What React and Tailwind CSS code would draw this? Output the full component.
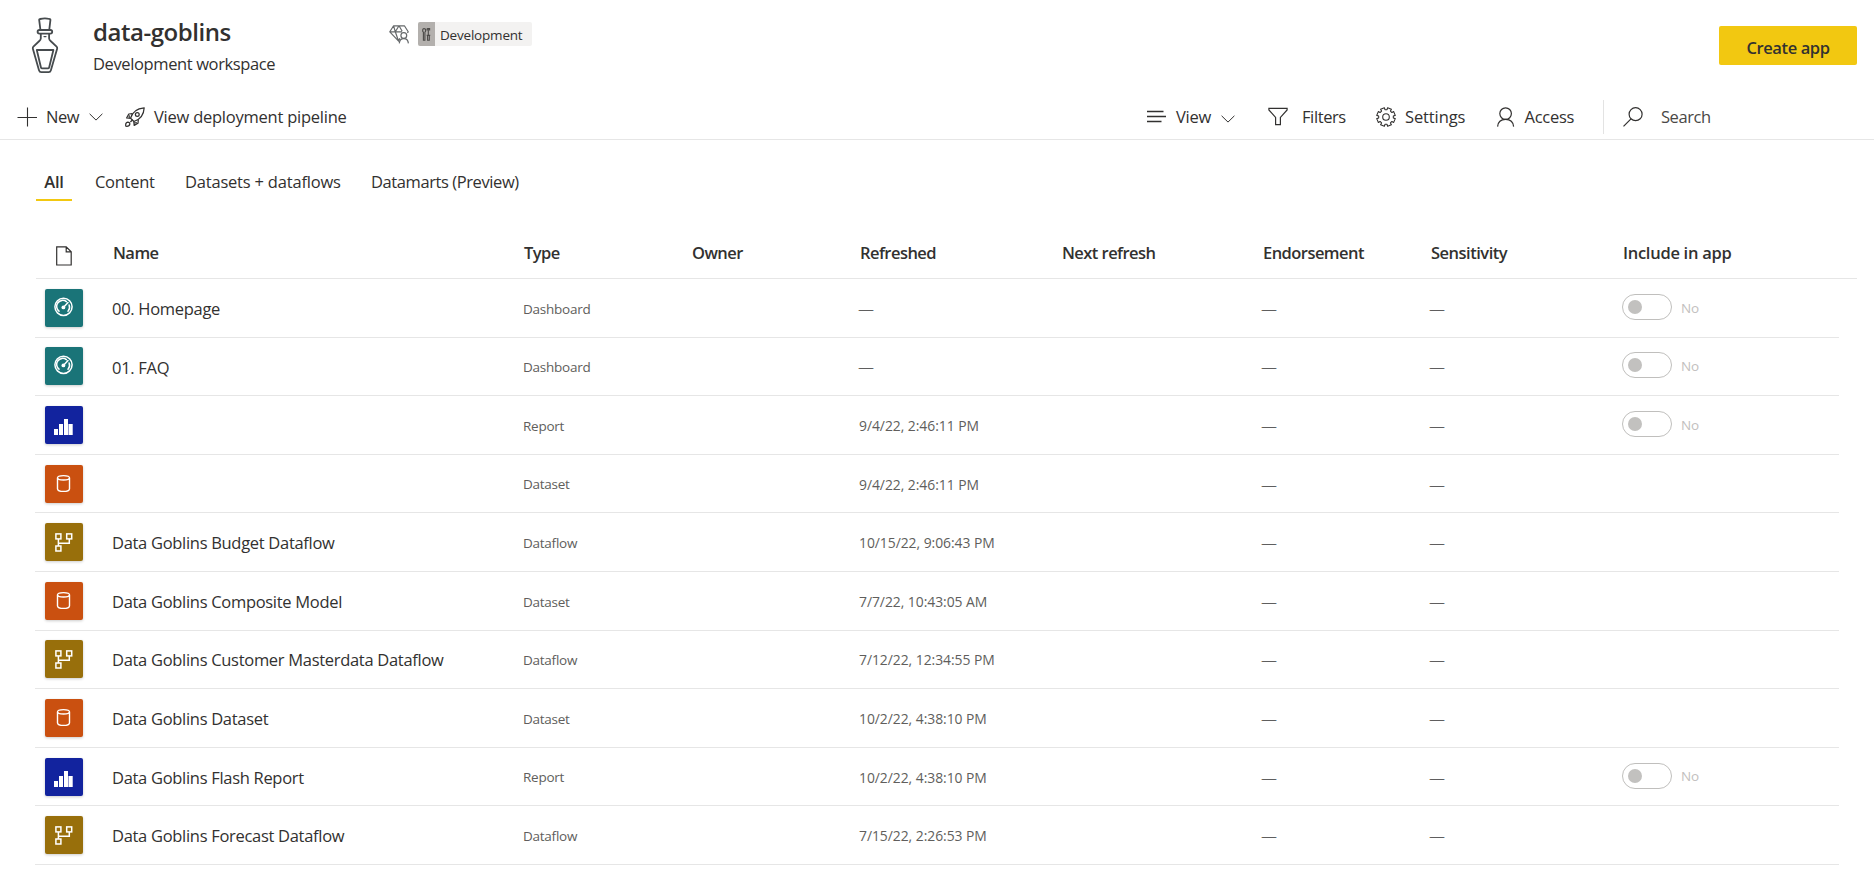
import React from "react";

const ROWS = [
  { name: "00. Homepage", type: "Dashboard", refreshed: "—", toggle: true },
  { name: "01. FAQ", type: "Dashboard", refreshed: "—", toggle: true },
  { name: "", type: "Report", refreshed: "9/4/22, 2:46:11 PM", toggle: true },
  { name: "", type: "Dataset", refreshed: "9/4/22, 2:46:11 PM" },
  { name: "Data Goblins Budget Dataflow", type: "Dataflow", refreshed: "10/15/22, 9:06:43 PM" },
  { name: "Data Goblins Composite Model", type: "Dataset", refreshed: "7/7/22, 10:43:05 AM" },
  { name: "Data Goblins Customer Masterdata Dataflow", type: "Dataflow", refreshed: "7/12/22, 12:34:55 PM" },
  { name: "Data Goblins Dataset", type: "Dataset", refreshed: "10/2/22, 4:38:10 PM" },
  { name: "Data Goblins Flash Report", type: "Report", refreshed: "10/2/22, 4:38:10 PM", toggle: true },
  { name: "Data Goblins Forecast Dataflow", type: "Dataflow", refreshed: "7/15/22, 2:26:53 PM" },
];

const TILE_COLORS = {
  Dashboard: "bg-[#1a7478]",
  Report: "bg-[#12239e]",
  Dataset: "bg-[#ca5010]",
  Dataflow: "bg-[#986f0b]",
};

const COLS =
  "grid grid-cols-[77px_411px_168px_168px_202px_200px_168px_1fr] items-center";

function Bottle() {
  return (
    <svg width="28" height="57" viewBox="0 0 28 57" fill="none" stroke="#464b4e" strokeWidth="1.8" strokeLinejoin="round" strokeLinecap="round">
      <path d="M9.4 12.5 8.2 3.2Q8 2 9.2 2Q14 .9 18.4 2Q19.6 2 19.4 3.2L18.3 12.5" />
      <rect x="6.6" y="13" width="14.6" height="3.6" rx="1.8" />
      <path d="M9.8 16.8V21.5Q9.6 23 8.3 24L2.4 29.6Q1.6 30.4 1.8 31.6L8 53.2Q8.5 55.1 10.3 55.1H17.6Q19.4 55.1 19.9 53.2L26.2 31.6Q26.4 30.4 25.6 29.6L19.6 24Q18.3 23 18.1 21.5V16.8" />
      <path d="M5.8 33H22.4L18.2 50.2Q17.9 51.4 16.8 51.4H11.3Q10.2 51.4 9.9 50.2Z" />
      <path d="M13 19.6H15" strokeWidth="1.2" />
    </svg>
  );
}

function Gem() {
  return (
    <svg width="21" height="19" viewBox="0 0 21 19" fill="none" stroke="#66696b" strokeWidth="1.2" strokeLinejoin="round">
      <path d="M9.6 16.2.8 6.8 4.6.8H15.4L19.2 6.8 18.4 7.9M.8 6.8H13M4.6.8 6.3 6.8 9.6 16.2 10.8 13.2M6.3 6.8 10 .8 13.2 6.2" />
      <circle cx="14.8" cy="10.5" r="2.9" />
      <path d="M10.3 18.4Q10.6 13.6 14.8 13.6Q19 13.6 19.4 18.4" />
    </svg>
  );
}

function Tools() {
  return (
    <svg width="9" height="13" viewBox="0 0 9 13" fill="none" stroke="#4b4947" strokeWidth="1.1">
      <path d="M.7 3.4V1.8Q.8.6 2 .6Q3.6.6 3.6 1.8V3.4L2.9 4.2V12.2H1.4V4.2Z" />
      <path d="M5.1 2.4V1.2Q5.1.6 5.8.6H7.6V2.4M6.3.8V7M4.7 7.4H8.2M7.3 7.4V12.2H5.6V7.4" />
    </svg>
  );
}

function Chevron() {
  return (
    <svg width="14" height="8" viewBox="0 0 14 8" fill="none" stroke="#323130" strokeWidth="1">
      <path d="M.6.8 7 7.1 13.4.8" />
    </svg>
  );
}

function Rocket() {
  return (
    <svg width="20" height="20" viewBox="0 0 20 20" fill="none" stroke="#323130" strokeWidth="1.25" strokeLinejoin="round">
      <path d="M5.6 11.2Q8 1.8 19.2.8Q18.6 11.6 8.9 14.5Z" />
      <path d="M7.2 6.6 3.8 7 1.6 11 5.7 11.4M13.3 12.7 13 16.2 9.2 18.4 8.8 14.4" />
      <path d="M4.2 8.3V11M12 15.8H9.2" />
      <circle cx="12.3" cy="7.4" r="1.9" />
      <path d="M5.4 15 7.6 12.8" />
      <path d="M.8 19.2Q.2 15.6 2.8 15.2Q5 15.2 4.8 17.2Q4.4 19.6.8 19.2Z" />
    </svg>
  );
}

function Gear() {
  const pts = [];
  for (let i = 0; i < 8; i++) {
    const a = ((i + 0.5) * Math.PI) / 4;
    [[-0.25, 7.4], [-0.22, 9.4], [0.22, 9.4], [0.25, 7.4]].forEach(([d, r]) =>
      pts.push(`${(10 + r * Math.sin(a + d)).toFixed(2)},${(10 - r * Math.cos(a + d)).toFixed(2)}`)
    );
  }
  return (
    <svg width="20" height="20" viewBox="0 0 20 20" fill="none" stroke="#323130" strokeWidth="1.1" strokeLinejoin="round">
      <polygon points={pts.join(" ")} />
      <circle cx="10" cy="10" r="3.3" />
    </svg>
  );
}

function TypeIcon({ type }) {
  return (
    <svg width="38" height="38" viewBox="0 0 38 38" fill="none" stroke="#fff">
      {type === "Dashboard" && (
        <g strokeWidth="1.5" strokeLinecap="round">
          <circle cx="18.5" cy="17.8" r="8.6" />
          <path d="M14 22.2A6 6 0 0 1 21.4 12.6M24.1 16A6 6 0 0 1 23 22.2" />
          <circle cx="18.4" cy="18.4" r="1.9" fill="#fff" stroke="none" />
          <path d="M18.6 18.2 23 13.6" />
        </g>
      )}
      {type === "Report" && (
        <g fill="#fff" stroke="none">
          <rect x="9" y="23" width="4" height="6" />
          <rect x="14" y="18" width="4" height="11" />
          <rect x="19" y="13" width="4" height="16" />
          <rect x="23" y="18" width="1.2" height="11" opacity=".55" />
          <rect x="24" y="18" width="3.7" height="11" />
        </g>
      )}
      {type === "Dataset" && (
        <g strokeWidth="1.4">
          <ellipse cx="18.5" cy="12.8" rx="6" ry="2.2" />
          <path d="M12.5 13V23.8Q12.9 26.4 18.5 26.4Q24.1 26.4 24.5 23.8V13" />
        </g>
      )}
      {type === "Dataflow" && (
        <g strokeWidth="1.5">
          <rect x="10.9" y="10.9" width="5" height="5" />
          <rect x="21.7" y="10.9" width="5" height="5" />
          <rect x="10.9" y="23" width="5" height="5" />
          <path d="M13.4 16V23M13.4 20.3H24.3V16" />
        </g>
      )}
    </svg>
  );
}

function Toggle() {
  return (
    <div className="flex items-center pb-0.5">
      <div className="flex h-[26px] w-[50px] items-center rounded-full border border-[#c0bfbd] pl-[5px]">
        <div className="h-[14px] w-[14px] rounded-full bg-[#c2c1bf]" />
      </div>
      <span className="ml-[9px] pt-0.5 text-[13.5px] text-[#c2c0be]">No</span>
    </div>
  );
}

export default function App() {
  return (
    <div className="h-[869px] w-[1874px] overflow-hidden bg-white font-['Open_Sans','Noto_Sans',sans-serif] text-[16.5px] tracking-[-0.28px] whitespace-nowrap text-[#323130]">
      <header className="border-b border-[#e6e6e6]">
        <div className="flex h-[94px]">
          <div className="w-[93px] pt-[17px] pl-[31px]">
            <Bottle />
          </div>
          <div className="w-[296px] pt-4">
            <h1 className="text-2xl leading-8 font-semibold tracking-[-0.45px]">data-goblins</h1>
            <p className="leading-8 tracking-[-0.38px]">Development workspace</p>
          </div>
          <div className="box-content flex h-6 items-center pt-[22px]">
            <Gem />
            <div className="ml-2 flex h-6 w-[114px] items-center rounded-[2px] bg-[#f3f2f1]">
              <div className="flex h-6 w-[17px] items-center justify-center rounded-l-[2px] bg-[#b3b0ad]">
                <Tools />
              </div>
              <span className="pt-0.5 pl-[5px] text-[13.5px] tracking-[-0.2px]">Development</span>
            </div>
          </div>
          <button className="mt-[26px] mr-[17px] ml-auto h-[39px] w-[138px] rounded-[2px] bg-[#f2c811] pt-1.5 font-semibold tracking-[-0.4px]">
            Create app
          </button>
        </div>

        <div className="flex h-[45px] items-center">
          <div className="flex w-[1147px] items-center">
            <svg className="ml-[17px]" width="20" height="20" viewBox="0 0 20 20" stroke="#323130" strokeWidth="1.1">
              <path d="M10.5 .5V19.5M.5 10.5H20" />
            </svg>
            <span className="ml-[9px] w-[43px] pt-0.5 tracking-[-0.5px]">New</span>
            <Chevron />
            <span className="ml-[22px]">
              <Rocket />
            </span>
            <span className="ml-[9px] pt-0.5 tracking-[-0.24px]">View deployment pipeline</span>
          </div>
          <div className="flex w-[121px] items-center">
            <svg width="20" height="14" viewBox="0 0 20 14" stroke="#323130" strokeWidth="1.3">
              <path d="M0 1.5H16.5M0 6.5H19M0 11.5H14.5" />
            </svg>
            <span className="ml-[9px] w-[45px] pt-0.5">View</span>
            <span className="pt-1">
              <Chevron />
            </span>
          </div>
          <div className="flex w-[108px] items-center">
            <svg width="20" height="19" viewBox="0 0 20 19" fill="none" stroke="#323130" strokeWidth="1.2">
              <path d="M.9 1.4H19.1V3L12.4 10.4V17.6H7.6V10.4L.9 3Z" />
            </svg>
            <span className="ml-[14px] pt-0.5 tracking-[-0.4px]">Filters</span>
          </div>
          <div className="flex w-[121px] items-center">
            <Gear />
            <span className="ml-[9px] pt-0.5 tracking-[-0.12px]">Settings</span>
          </div>
          <div className="flex h-[34px] w-[107px] items-center border-r border-[#e3e3e3]">
            <svg width="18" height="20" viewBox="0 0 18 20" fill="none" stroke="#323130" strokeWidth="1.2">
              <circle cx="8.6" cy="6.6" r="5.8" />
              <path d="M.6 19.6Q1.2 12.4 8.6 12.4Q16 12.4 16.6 19.6" />
            </svg>
            <span className="ml-[9.5px] pt-0.5 tracking-[-0.26px]">Access</span>
          </div>
          <svg className="ml-[19px]" width="20" height="20" viewBox="0 0 20 20" fill="none" stroke="#323130" strokeWidth="1.2">
            <circle cx="12.6" cy="7.2" r="6.5" />
            <path d="M8 11.8.5 19.3" />
          </svg>
          <span className="ml-[18px] pt-0.5 tracking-[-0.45px] text-[#4a4846]">Search</span>
        </div>
      </header>

      <nav className="flex pt-[23px] pl-9 leading-[38px]">
        <div className="h-[38px] w-9 border-b-2 border-[#f2c811] text-center font-semibold">All</div>
        <div className="ml-[23px] w-[90px]">Content</div>
        <div className="w-[186px] tracking-[-0.2px]">Datasets + dataflows</div>
        <div className="tracking-[-0.41px]">Datamarts (Preview)</div>
      </nav>

      <main className="pt-[26px] pl-[35px]">
        <div className={`${COLS} ml-px h-[52px] w-[1821px] border-b border-[#e6e6e6] pt-0.5 font-semibold tracking-[-0.55px]`}>
          <svg className="mt-[4px] ml-5" width="16" height="20" viewBox="0 0 16 20" fill="none" stroke="#323130" strokeWidth="1.2">
            <path d="M.7.9H10.2L15.2 5.8V19H.7ZM10.2.9V5.8H15.2" />
          </svg>
          <span>Name</span>
          <span>Type</span>
          <span>Owner</span>
          <span>Refreshed</span>
          <span>Next refresh</span>
          <span className="pl-px">Endorsement</span>
          <div className="flex pl-px">
            <span className="w-48 tracking-[-0.5px]">Sensitivity</span>
            <span className="tracking-[-0.28px]">Include in app</span>
          </div>
        </div>
        {ROWS.map((r, i) => (
          <div key={i} className={`${COLS} h-[58.6px] w-[1804px] border-b border-[#e6e6e6] text-[13.5px] tracking-[-0.25px] text-[#605e5c]`}>
            <div className={`ml-[10px] h-[38px] w-[38px] rounded-[2px] shadow-[0_1px_3px_rgba(0,0,0,0.2)] ${TILE_COLORS[r.type]}`}>
              <TypeIcon type={r.type} />
            </div>
            <span className="pt-[3px] text-[16.5px] tracking-[-0.3px] text-[#323130]">{r.name}</span>
            <span className="pt-0.5">{r.type}</span>
            <span />
            {r.refreshed === "—" ? (
              <span className="-ml-px pt-0.5 text-[16px] font-light text-[#3b3a39]">—</span>
            ) : (
              <span className="pt-[3px] text-[13.9px] tracking-[-0.04px]">{r.refreshed}</span>
            )}
            <span />
            <span className="pt-0.5 text-[16px] font-light text-[#3b3a39]">—</span>
            <div className="flex items-center">
              <span className="w-[193px] pt-0.5 text-[16px] font-light text-[#3b3a39]">—</span>
              {r.toggle && <Toggle />}
            </div>
          </div>
        ))}
      </main>
    </div>
  );
}
